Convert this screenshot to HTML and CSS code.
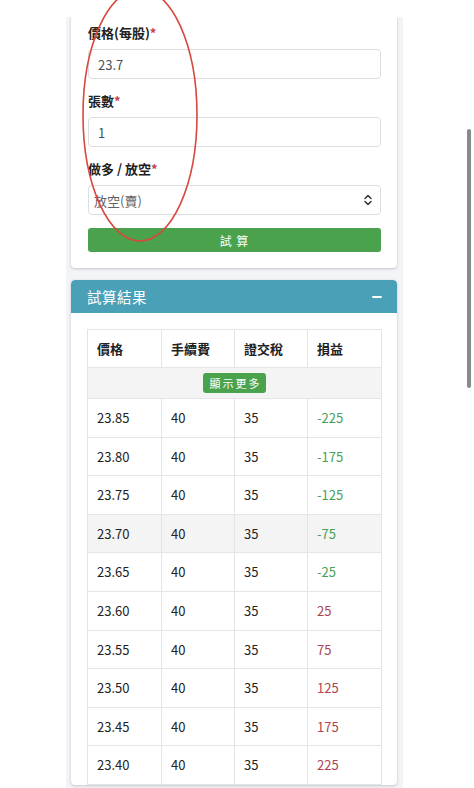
FILE: index.html
```html
<!DOCTYPE html>
<html lang="zh-Hant">
<head>
<meta charset="utf-8">
<title>試算</title>
<link rel="stylesheet" href="styles.css">
</head>
<body>
<div class="wrapper">
  <div class="card form-card">
    <div class="form-group">
      <label class="label">價格(每股)<span class="req">*</span></label>
      <div class="input">23.7</div>
    </div>
    <div class="form-group">
      <label class="label">張數<span class="req">*</span></label>
      <div class="input">1</div>
    </div>
    <div class="form-group">
      <label class="label">做多 / 放空<span class="req">*</span></label>
      <div class="input select">
        <span class="select-text">放空(賣)</span>
        <svg class="caret" width="10" height="12" viewBox="0 0 10 12"><path d="M2 4.5 L5 1.5 L8 4.5 M2 7.5 L5 10.5 L8 7.5" fill="none" stroke="#333" stroke-width="1.5" stroke-linecap="round" stroke-linejoin="round"/></svg>
      </div>
    </div>
    <div class="btn-calc">試 算</div>
  </div>

  <div class="card result-card">
    <div class="card-header">
      <span class="card-title">試算結果</span>
      <span class="minus"></span>
    </div>
    <div class="card-body">
      <table class="table">
        <colgroup><col class="c1"><col class="c2"><col class="c3"><col class="c4"></colgroup>
        <thead>
          <tr><th>價格</th><th>手續費</th><th>證交稅</th><th>損益</th></tr>
        </thead>
        <tbody>
          <tr class="more-row"><td colspan="4"><span class="btn-more">顯示更多</span></td></tr>
          <tr><td>23.85</td><td>40</td><td>35</td><td class="loss">-225</td></tr>
          <tr><td>23.80</td><td>40</td><td>35</td><td class="loss">-175</td></tr>
          <tr><td>23.75</td><td>40</td><td>35</td><td class="loss">-125</td></tr>
          <tr class="current"><td>23.70</td><td>40</td><td>35</td><td class="loss">-75</td></tr>
          <tr><td>23.65</td><td>40</td><td>35</td><td class="loss">-25</td></tr>
          <tr><td>23.60</td><td>40</td><td>35</td><td class="gain">25</td></tr>
          <tr><td>23.55</td><td>40</td><td>35</td><td class="gain">75</td></tr>
          <tr><td>23.50</td><td>40</td><td>35</td><td class="gain">125</td></tr>
          <tr><td>23.45</td><td>40</td><td>35</td><td class="gain">175</td></tr>
          <tr><td>23.40</td><td>40</td><td>35</td><td class="gain">225</td></tr>
        </tbody>
      </table>
    </div>
  </div>
</div>

<div class="scrollbar"></div>

<svg class="annotation" width="474" height="788" viewBox="0 0 474 788">
  <ellipse cx="140" cy="115" rx="57" ry="126" fill="none" stroke="#d8483c" stroke-width="1.6"/>
</svg>
</body>
</html>
```

FILE: styles.css
```css
* { box-sizing: border-box; }

html, body {
  margin: 0;
  padding: 0;
  background: #ffffff;
}

body {
  width: 474px;
  height: 788px;
  overflow: hidden;
  position: relative;
  font-family: "Noto Sans CJK TC", "Noto Sans", sans-serif;
  font-size: 13px;
  color: #212529;
}

.wrapper {
  margin: 17px 0 0 66px;
  width: 337px;
  height: 771px;
  background: #f3f4f7;
  padding: 0 6px 0 5px;
  overflow: hidden;
}

.card {
  background: #ffffff;
  border-radius: 4px;
  box-shadow: 0 0 1px rgba(0,0,0,.125), 0 1px 3px rgba(0,0,0,.18);
}

.form-card {
  border-radius: 0 0 4px 4px;
  padding: 6px 16px 16px 16px;
}

.form-group {
  display: flex;
  flex-direction: column;
  margin-bottom: 12px;
}

.form-group:last-of-type {
  margin-bottom: 0;
}

.label {
  display: block;
  font-weight: 700;
  font-size: 13px;
  line-height: 20px;
  margin-bottom: 6px;
  padding-left: 1px;
  color: #222;
}

.req {
  color: #c9404c;
}

.input {
  height: 30px;
  border: 1px solid #dadde1;
  border-radius: 4px;
  padding: 0 9px;
  display: flex;
  align-items: center;
  color: #4a4f55;
  font-size: 13px;
  margin-left: 1px;
}

.select {
  justify-content: space-between;
  padding: 0 7px 0 5px;
}

.select-text {
  color: #5f6368;
}

.caret {
  display: block;
}

.btn-calc {
  margin-top: 13px;
  margin-left: 1px;
  height: 24px;
  background: #4aa34c;
  border-radius: 3px;
  color: #ffffff;
  font-size: 12px;
  display: flex;
  align-items: center;
  justify-content: center;
  letter-spacing: 1px;
}

.result-card {
  margin-top: 12px;
  overflow: hidden;
}

.card-header {
  height: 33px;
  background: #4aa0b7;
  color: #ffffff;
  display: flex;
  align-items: center;
  justify-content: space-between;
  padding: 0 15px 0 16px;
  border-radius: 4px 4px 0 0;
}

.card-title {
  font-size: 14.5px;
  letter-spacing: 0.5px;
}

.minus {
  width: 10px;
  height: 2px;
  background: #ffffff;
  border-radius: 1px;
}

.card-body {
  padding: 16px 16px 0 16px;
}

.table {
  width: 294px;
  table-layout: fixed;
  border-collapse: separate;
  border-spacing: 0;
  border-top: 1px solid #e3e5e8;
  border-left: 1px solid #e3e5e8;
}

.c1 { width: 74px; }
.c2 { width: 73px; }
.c3 { width: 73px; }
.c4 { width: 74px; }

.table th,
.table td {
  border-right: 1px solid #e3e5e8;
  border-bottom: 1px solid #e3e5e8;
  text-align: left;
  padding: 10px 9px;
  font-size: 13px;
  line-height: 17.6px;
  color: #222;
  white-space: nowrap;
}

.table th {
  font-weight: 700;
  line-height: 17px;
}

.more-row td {
  background: #f4f4f5;
  text-align: center;
  padding: 5px 9px;
  line-height: 20px;
}

.btn-more {
  display: inline-block;
  height: 20px;
  width: 63px;
  line-height: 20px;
  background: #4aa34c;
  color: #ffffff;
  border-radius: 3px;
  font-size: 11px;
  letter-spacing: 2px;
  text-indent: 2px;
  vertical-align: top;
}

.current td {
  background: #f4f4f5;
}

.table td.loss { color: #47a058; }
.table td.gain { color: #ae4350; }

.scrollbar {
  position: absolute;
  left: 467px;
  top: 129px;
  width: 4px;
  height: 259px;
  background: #8a8a8a;
  border-radius: 2px;
}

.annotation {
  position: absolute;
  left: 0;
  top: 0;
  pointer-events: none;
}
```
